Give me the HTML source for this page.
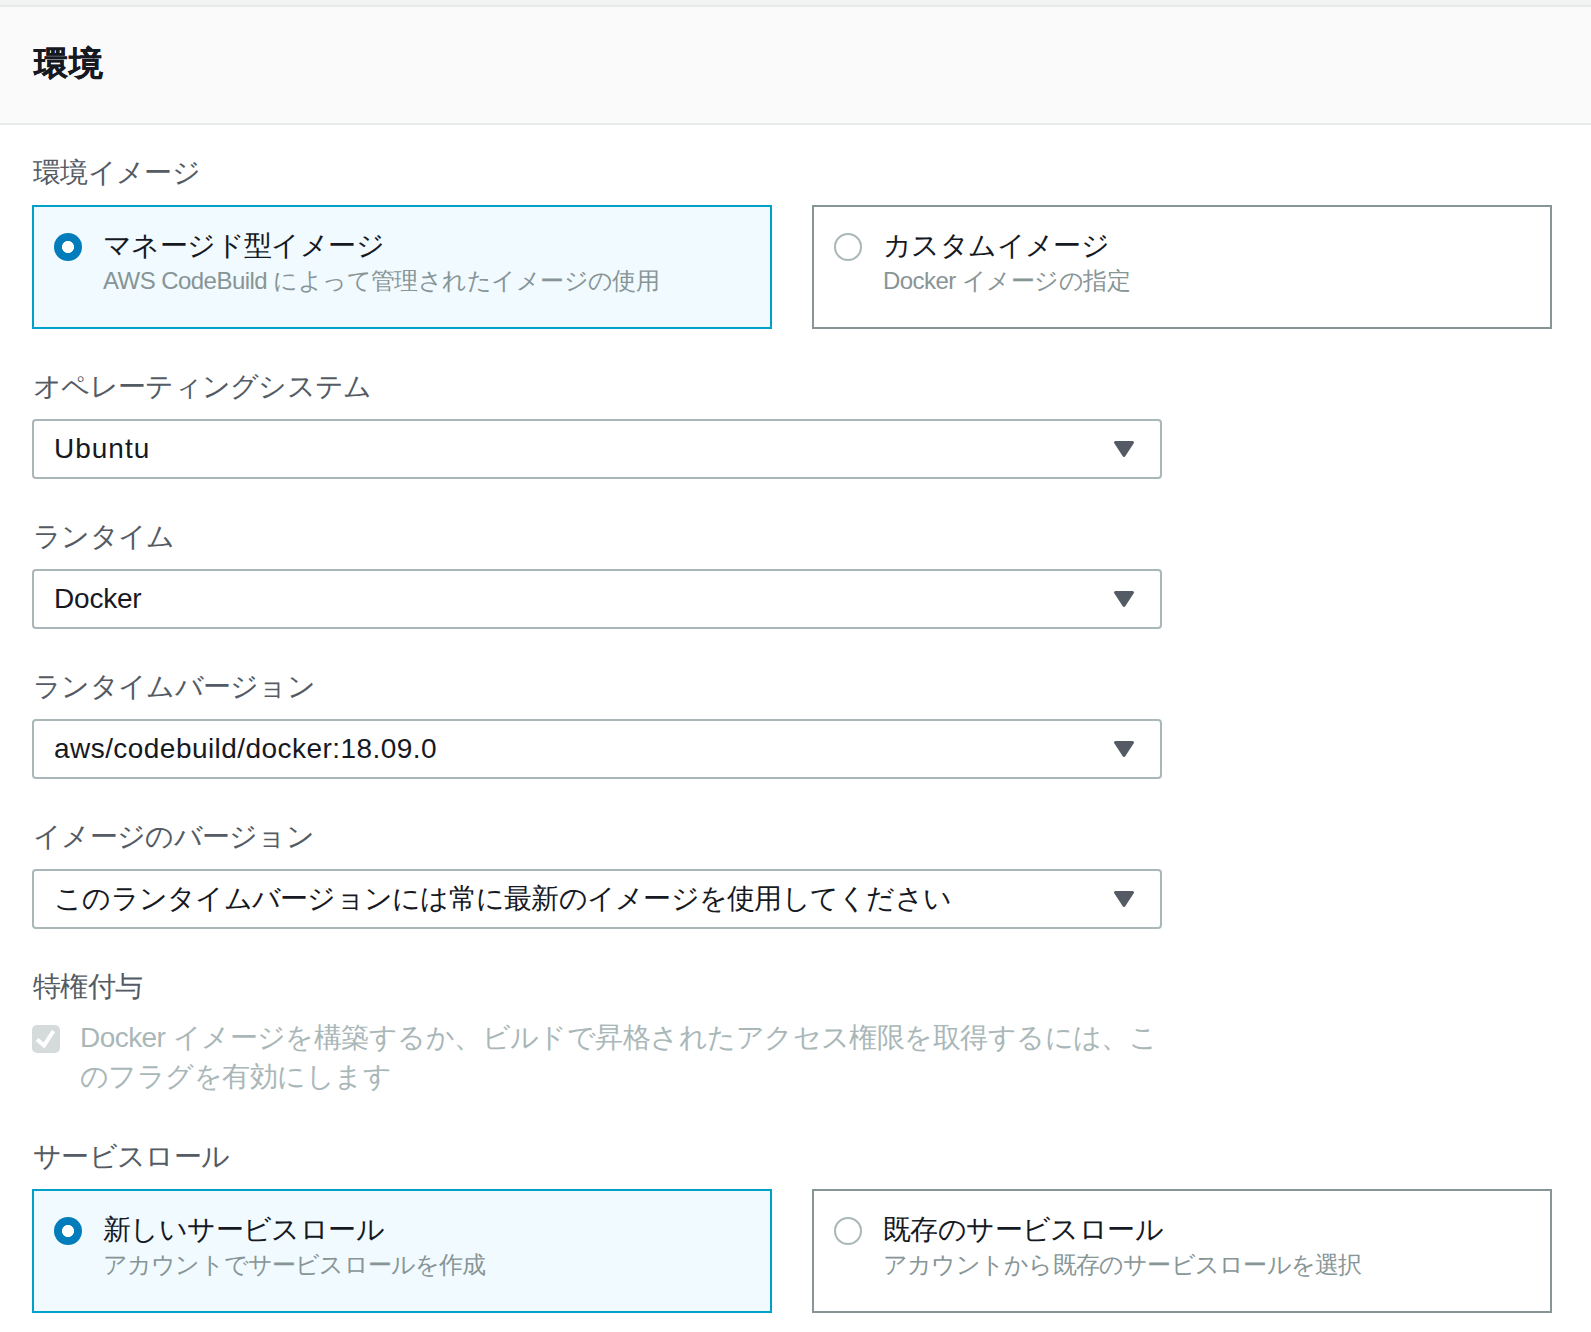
<!DOCTYPE html>
<html lang="ja">
<head>
<meta charset="utf-8">
<style>
html,body{margin:0;padding:0;}
body{width:1591px;height:1332px;overflow:hidden;background:#fff;position:relative;font-family:"Liberation Sans",sans-serif;color:#16191f;}
.abs{position:absolute;}
.topstrip{left:0;top:0;width:1591px;height:4px;background:#f2f3f3;}
.topline0{left:0;top:4px;width:1591px;height:1px;background:#eff0f1;}
.topline{left:0;top:5px;width:1591px;height:2px;background:#e8ebeb;}
.header{left:0;top:7px;width:1591px;height:116px;background:#fafafa;}
.headline{left:0;top:123px;width:1591px;height:2px;background:#e8ebeb;}
.h2{left:34px;top:40px;font-size:34px;line-height:46px;letter-spacing:1px;-webkit-text-stroke:0.3px #16191f;font-weight:bold;color:#16191f;white-space:nowrap;}
.label{left:33px;font-size:28px;line-height:40px;letter-spacing:-0.7px;color:#545b64;white-space:nowrap;}
.card{box-sizing:border-box;width:740px;height:124px;border:2px solid #879596;background:#fff;}
.card.sel{border-color:#00a1c9;background:#f1faff;}
.radio{box-sizing:border-box;position:absolute;left:20px;top:26px;width:28px;height:28px;border-radius:50%;border:2px solid #aab7b8;background:#fff;}
.card.sel .radio{border:none;background:radial-gradient(circle at 50% 50%, #fff 0, #fff 5.7px, #037cbb 6.3px);}
.ctitle{position:absolute;left:69px;top:19px;font-size:28px;line-height:40px;letter-spacing:-0.6px;color:#16191f;white-space:nowrap;}
.csub{position:absolute;left:69px;top:58px;font-size:24px;line-height:32px;letter-spacing:-0.55px;color:#879596;white-space:nowrap;}
.select{box-sizing:border-box;left:32px;width:1130px;height:60px;border:2px solid #aab7b8;border-radius:4px;background:#fff;}
.stext{position:absolute;left:20px;top:8px;font-size:28px;line-height:40px;letter-spacing:0.45px;color:#16191f;white-space:nowrap;}
.arrow{position:absolute;left:1079px;top:19px;width:22px;height:18px;}
.chk{left:32px;top:1025px;width:28px;height:28px;border-radius:5px;background:#d5dbdb;}
.chktext{left:80px;top:1018px;font-size:28px;line-height:39px;letter-spacing:-0.55px;color:#aab7b8;white-space:nowrap;}
</style>
</head>
<body>
<div class="abs topstrip"></div>
<div class="abs topline0"></div>
<div class="abs topline"></div>
<div class="abs header"></div>
<div class="abs headline"></div>
<div class="abs h2">環境</div>

<div class="abs label" style="top:153px">環境イメージ</div>
<div class="abs card sel" style="left:32px;top:205px"><div class="radio"></div><div class="ctitle">マネージド型イメージ</div><div class="csub">AWS CodeBuild によって管理されたイメージの使用</div></div>
<div class="abs card" style="left:812px;top:205px"><div class="radio"></div><div class="ctitle">カスタムイメージ</div><div class="csub">Docker イメージの指定</div></div>

<div class="abs label" style="top:367px">オペレーティングシステム</div>
<div class="abs select" style="top:419px"><div class="stext" style="letter-spacing:1px">Ubuntu</div><svg class="arrow" viewBox="0 0 22 18"><path d="M2.5 2.5 L19.5 2.5 L11 15.5 Z" fill="#545b64" stroke="#545b64" stroke-width="3" stroke-linejoin="round"/></svg></div>

<div class="abs label" style="top:517px">ランタイム</div>
<div class="abs select" style="top:569px"><div class="stext" style="letter-spacing:-0.2px">Docker</div><svg class="arrow" viewBox="0 0 22 18"><path d="M2.5 2.5 L19.5 2.5 L11 15.5 Z" fill="#545b64" stroke="#545b64" stroke-width="3" stroke-linejoin="round"/></svg></div>

<div class="abs label" style="top:667px">ランタイムバージョン</div>
<div class="abs select" style="top:719px"><div class="stext">aws/codebuild/docker:18.09.0</div><svg class="arrow" viewBox="0 0 22 18"><path d="M2.5 2.5 L19.5 2.5 L11 15.5 Z" fill="#545b64" stroke="#545b64" stroke-width="3" stroke-linejoin="round"/></svg></div>

<div class="abs label" style="top:817px">イメージのバージョン</div>
<div class="abs select" style="top:869px"><div class="stext" style="letter-spacing:-0.75px">このランタイムバージョンには常に最新のイメージを使用してください</div><svg class="arrow" viewBox="0 0 22 18"><path d="M2.5 2.5 L19.5 2.5 L11 15.5 Z" fill="#545b64" stroke="#545b64" stroke-width="3" stroke-linejoin="round"/></svg></div>

<div class="abs label" style="top:967px">特権付与</div>
<div class="abs chk"><svg width="28" height="28" viewBox="0 0 28 28" style="position:absolute;left:0;top:0"><path d="M5.5 24.5" fill="none"/><path d="M5 14.5 L12 20.5 L21.5 6" fill="none" stroke="#fff" stroke-width="4"/></svg></div>
<div class="abs chktext">Docker イメージを構築するか、ビルドで昇格されたアクセス権限を取得するには、こ<br>のフラグを有効にします</div>

<div class="abs label" style="top:1137px">サービスロール</div>
<div class="abs card sel" style="left:32px;top:1189px"><div class="radio"></div><div class="ctitle">新しいサービスロール</div><div class="csub" style="letter-spacing:-0.85px">アカウントでサービスロールを作成</div></div>
<div class="abs card" style="left:812px;top:1189px"><div class="radio"></div><div class="ctitle">既存のサービスロール</div><div class="csub" style="letter-spacing:-0.78px">アカウントから既存のサービスロールを選択</div></div>
</body>
</html>
